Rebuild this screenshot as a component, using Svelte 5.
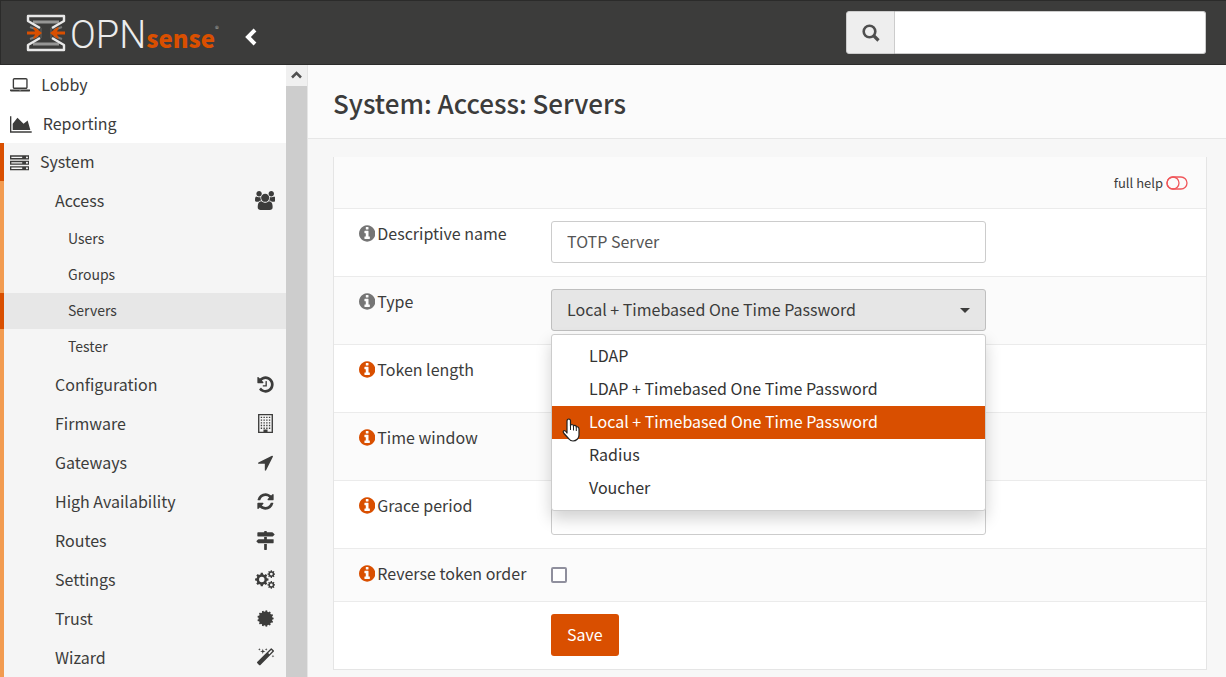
<script>
  const gear = (cx, cy, outer, inner, teeth) => {
    const step = (Math.PI * 2) / teeth;
    const pts = [];
    for (let i = 0; i < teeth; i++) {
      const a = i * step;
      for (const [r, d] of [[inner, -0.3], [outer, -0.2], [outer, 0.2], [inner, 0.3]]) {
        pts.push(`${Math.round(cx + r * Math.cos(a + d * step))} ${Math.round(cy + r * Math.sin(a + d * step))}`);
      }
    }
    return `M${pts.join('L')}z`;
  };
  const hole = (cx, cy, r) => `M${cx - r} ${cy}a${r} ${r} 0 1 0 ${2 * r} 0a${r} ${r} 0 1 0 ${-2 * r} 0z`;
  const box = (x, y, w, h) => `M${x} ${y}h${w}v${h}h${-w}z`;

  let building = box(192, 0, 1408, 1792) + box(320, 128, 1152, 1536);
  for (let r = 0; r < 5; r++) {
    for (let c = 0; c < 4; c++) building += box(448 + c * 256, 256 + r * 256, 128, 128);
  }
  building += box(704, 1472, 384, 192);

  const icons = {
    laptop: [1920, 'M416 1216q-66 0-113-47t-47-113v-704q0-66 47-113t113-47h1088q66 0 113 47t47 113v704q0 66-47 113t-113 47h-1088zm-32-864v704q0 13 9.500 22.500t22.500 9.500h1088q13 0 22.500-9.500t9.500-22.500v-704q0-13-9.500-22.500t-22.500-9.500h-1088q-13 0-22.500 9.500t-9.500 22.500zm1376 928h160v96q0 40-47 68t-113 28h-1600q-66 0-113-28t-47-68v-96h1760zm-720 96q16 0 16-16t-16-16h-160q-16 0-16 16t16 16h160z'],
    chart: [2048, 'M2048 1536v128h-2048v-1536h128v1408h1920zM1664 512l256 896h-1664v-576l448-576 576 576z'],
    server: [1792, 'M128 1408h1024v-128h-1024v128zm0-512h1024v-128h-1024v128zm1568 448q0-40-28-68t-68-28-68 28-28 68 28 68 68 28 68-28 28-68zm-1568-960h1024v-128h-1024v128zm1568 448q0-40-28-68t-68-28-68 28-28 68 28 68 68 28 68-28 28-68zm0-512q0-40-28-68t-68-28-68 28-28 68 28 68 68 28 68-28 28-68zm96 832v384h-1792v-384h1792zm0-512v384h-1792v-384h1792zm0-512v384h-1792v-384h1792z'],
    users: [1920, 'M593 896q-162 5-265 128h-134q-82 0-138-40.500t-56-118.500q0-353 124-353 6 0 43.500 21t97.500 42.500 119 21.500q67 0 133-23-5 37-5 66 0 139 81 256zm1071 637q0 120-73 189.500t-194 69.500h-874q-121 0-194-69.500t-73-189.500q0-53 3.500-103.500t14-109 26.500-108.500 43-97.500 62-81 85.500-53.500 111.500-20q10 0 43 21.500t73 48 107 48 135 21.500 135-21.500 107-48 73-48 43-21.500q61 0 111.500 20t85.500 53.500 62 81 43 97.500 26.500 108.500 14 109 3.500 103.500zm-1024-1277q0 106-75 181t-181 75-181-75-75-181 75-181 181-75 181 75 75 181zm704 384q0 159-112.500 271.500t-271.500 112.500-271.500-112.500-112.500-271.500 112.500-271.500 271.500-112.500 271.500 112.500 112.500 271.500zm576 225q0 78-56 118.500t-138 40.500h-134q-103-123-265-128 81-117 81-256 0-29-5-66 66 23 133 23 59 0 119-21.500t97.500-42.500 43.500-21q124 0 124 353zm-128-609q0 106-75 181t-181 75-181-75-75-181 75-181 181-75 181 75 75 181z'],
    history: [1792, 'M1664 896q0 156-61 298t-164 245-245 164-298 61q-172 0-327-72.500t-264-204.500q-7-10-6.500-22.500t8.500-20.500l137-138q10-9 25-9 16 2 23 12 73 95 179 147t225 52q104 0 198.500-40.500t163.500-109.500 109.500-163.500 40.500-198.500-40.500-198.500-109.500-163.500-163.500-109.500-198.500-40.500q-98 0-188 35.500t-160 101.500l137 138q31 30 14 69-17 40-59 40h-448q-26 0-45-19t-19-45v-448q0-42 40-59 39-17 69 14l130 129q107-101 244.500-156.500t284.500-55.500q156 0 298 61t245 164 164 245 61 298zm-640-288v448q0 14-9 23t-23 9h-320q-14 0-23-9t-9-23v-64q0-14 9-23t23-9h224v-352q0-14 9-23t23-9h64q14 0 23 9t9 23z'],
    building: [1792, building],
    arrow: [1792, 'M1593 349l-640 1280q-17 35-57 35-5 0-15-2-22-5-35.500-22.500t-13.500-39.500v-576h-576q-22 0-39.500-13.500t-22.500-35.500 4-42 29-30l1280-640q13-7 29-7 27 0 45 19 15 14 18.500 34.500t-6.500 39.500z'],
    refresh: [1792, 'M1639 1056q0 5-1 7-64 268-268 434.500t-478 166.500q-146 0-282.500-55t-243.500-157l-129 129q-19 19-45 19t-45-19-19-45v-448q0-26 19-45t45-19h448q26 0 45 19t19 45-19 45l-137 137q71 66 161 102t187 36q134 0 250-65t186-179q11-17 53-117 8-23 30-23h192q13 0 22.500 9.500t9.500 22.500zm25-800v448q0 26-19 45t-45 19h-448q-26 0-45-19t-19-45 19-45l138-138q-148-137-349-137-134 0-250 65t-186 179q-11 17-53 117-8 23-30 23h-199q-13 0-22.500-9.500t-9.500-22.500v-7q65-268 270-434.500t480-166.500q146 0 284 55.500t245 156.500l130-129q19-19 45-19t45 19 19 45z'],
    signs: [1792, 'M1745 297q10 10 10 23t-10 23l-141 141q-28 28-68 28h-1344q-26 0-45-19t-19-45v-256q0-26 19-45t45-19h576v-64q0-26 19-45t45-19h128q26 0 45 19t19 45v64h512q40 0 68 28zm-977 919h256v512q0 26-19 45t-45 19h-128q-26 0-45-19t-19-45v-512zm832-448q26 0 45 19t19 45v256q0 26-19 45t-45 19h-1344q-40 0-68-28l-141-141q-10-10-10-23t10-23l141-141q28-28 68-28h512v-192h256v192h576z'],
    cogs: [1920, gear(640, 896, 640, 500, 8) + hole(640, 896, 256) + gear(1540, 384, 370, 280, 8) + hole(1540, 384, 130) + gear(1540, 1408, 370, 280, 8) + hole(1540, 1408, 130)],
    certificate: [1792, gear(896, 896, 768, 660, 13)],
    magic: [1792, 'M1254 581l293-293-107-107-293 293zm447-293q0 27-18 45l-1286 1286q-18 18-45 18t-45-18l-198-198q-18-18-18-45t18-45l1286-1286q18-18 45-18t45 18l198 198q18 18 18 45zm-1351-190l98 30-98 30-30 98-30-98-98-30 98-30 30-98zm350 162l196 60-196 60-60 196-60-196-196-60 196-60 60-196zm930 478l98 30-98 30-30 98-30-98-98-30 98-30 30-98zm-640-640l98 30-98 30-30 98-30-98-98-30 98-30 30-98z'],
    info: [1536, 'M1024 1376v-160q0-14-9-23t-23-9h-96v-512q0-14-9-23t-23-9h-320q-14 0-23 9t-9 23v160q0 14 9 23t23 9h96v320h-96q-14 0-23 9t-9 23v160q0 14 9 23t23 9h448q14 0 23-9t9-23zm-128-896v-160q0-14-9-23t-23-9h-192q-14 0-23 9t-9 23v160q0 14 9 23t23 9h192q14 0 23-9t9-23zm640 416q0 209-103 385.500t-279.500 279.500-385.500 103-385.500-103-279.500-279.500-103-385.500 103-385.500 279.500-279.500 385.500-103 385.500 103 279.500 279.500 103 385.500z']
  };

  const top = [
    { label: 'Lobby', icon: 'laptop' },
    { label: 'Reporting', icon: 'chart' },
    { label: 'System', icon: 'server', open: true }
  ];
  const access = ['Users', 'Groups', 'Servers', 'Tester'];
  const system = [
    { label: 'Access', icon: 'users', children: access },
    { label: 'Configuration', icon: 'history' },
    { label: 'Firmware', icon: 'building' },
    { label: 'Gateways', icon: 'arrow' },
    { label: 'High Availability', icon: 'refresh' },
    { label: 'Routes', icon: 'signs' },
    { label: 'Settings', icon: 'cogs' },
    { label: 'Trust', icon: 'certificate' },
    { label: 'Wizard', icon: 'magic' }
  ];
  const types = ['LDAP', 'LDAP + Timebased One Time Password', 'Local + Timebased One Time Password', 'Radius', 'Voucher'];

  let name = $state('TOTP Server');
  let type = $state(types[2]);
  let menuOpen = $state(true);
  let tokenLength = $state('');
  let timeWindow = $state('');
  let gracePeriod = $state('');
  let reverse = $state(false);

  function choose(t) {
    type = t;
    menuOpen = false;
  }
</script>

{#snippet icon(key)}
  <svg class="icon" viewBox="0 0 {icons[key][0]} 1792" aria-hidden="true">
    <path fill-rule="evenodd" d={icons[key][1]} />
  </svg>
{/snippet}

<header>
  <a class="brand" href="#home">
    <svg class="mark" viewBox="0 0 40 40" aria-hidden="true">
      <g fill="none" stroke-linejoin="round">
        <path d="M7 9H33M7 31H33" stroke="#969695" stroke-width="3" />
        <path d="M4 14l8 3M36 14l-8 3M4 26l8-3M36 26l-8-3" stroke="#777776" stroke-width="2" />
        <path d="M15 15v10M25 15v10" stroke="#666665" stroke-width="1" />
        <path d="M14 15L2 8V3H38V8L26 15" stroke="#e8e8e8" stroke-width="2.400" />
        <path d="M14 25L2 32V37H38V32L26 25" stroke="#e8e8e8" stroke-width="2.400" />
      </g>
      <path d="M1 18.500H9L7 14.500H9L16 20 9 25.500H7L9 21.500H1zM39 18.500H31L33 14.500H31L24 20 31 25.500H33L31 21.500H39z" fill="#d94f00" />
    </svg>
    <span class="opn">OPN</span><span class="sense">sense</span><span class="reg">®</span>
  </a>
  <button class="collapse" aria-label="Collapse menu">
    <svg viewBox="0 0 12 18" aria-hidden="true"><path d="M10 2L3 9l7 7" fill="none" stroke="#fff" stroke-width="4" /></svg>
  </button>
  <form class="search" role="search">
    <label for="q" aria-label="Search">
      <svg viewBox="0 0 18 18" aria-hidden="true">
        <circle cx="7.500" cy="7.500" r="5.800" fill="none" stroke="#4f4f4f" stroke-width="2.600" />
        <path d="M11.500 11.500l5 5" stroke="#4f4f4f" stroke-width="3.200" />
      </svg>
    </label>
    <input id="q" type="text" />
  </form>
</header>

<div class="body">
  <aside>
    <nav>
      {#each top as item}
        <a class="l1" class:open={item.open} href="#{item.label}">{@render icon(item.icon)}<span>{item.label}</span></a>
      {/each}
      <div class="sub">
        {#each system as item}
          <a class="l2" href="#{item.label}"><span>{item.label}</span><i>{@render icon(item.icon)}</i></a>
          {#if item.children}
            <div class="children">
              {#each item.children as child}
                <a class="l3" class:active={child === 'Servers'} href="#{child}"><span>{child}</span></a>
              {/each}
            </div>
          {/if}
        {/each}
      </div>
    </nav>
    <div class="scroll" aria-hidden="true">
      <svg viewBox="0 0 21 21"><path d="M6 12.500l4.500-4.500 4.500 4.500" fill="none" stroke="#505050" stroke-width="2.500" /></svg>
    </div>
  </aside>

  <main>
    <div class="title"><h1>System: Access: Servers</h1></div>
    <form class="panel" onsubmit={(e) => e.preventDefault()}>
      <div class="help">
        <button type="button">full help
          <svg viewBox="0 0 22 14" aria-hidden="true">
            <g fill="none" stroke="#f0565a" stroke-width="1.300"><rect x="1" y="1" width="20" height="12" rx="6" /><circle cx="7" cy="7" r="6" /></g>
          </svg>
        </button>
      </div>
      <div class="row">
        <label for="name"><i class="muted">{@render icon('info')}</i>Descriptive name</label>
        <input id="name" class="field" type="text" bind:value={name} />
      </div>
      <div class="row">
        <label for="type"><i class="muted">{@render icon('info')}</i>Type</label>
        <div class="picker">
          <select id="type" class="field" bind:value={type}>
            {#each types as t}<option>{t}</option>{/each}
          </select>
          <span class="caret"></span>
          {#if menuOpen}
            <div class="menu" role="listbox" aria-label="Type">
              {#each types as t}
                <button type="button" role="option" aria-selected={t === type} class:selected={t === type} onclick={() => choose(t)}>{t}</button>
              {/each}
              <svg class="pointer" viewBox="0 0 18 24" aria-hidden="true">
                <path d="M5 15V3.200Q5 1 6.800 1T8.500 3.200V8Q8.500 6.500 10 6.500T11.500 8.500Q11.500 7.200 13 7.400T14.300 9.500Q14.500 8.500 15.700 8.800T17 11V17Q17 19.500 15.500 21Q13.500 23 11 23T7 21L2 15.500Q.5 13.500 1.800 12.700T5 15z" fill="#fff" stroke="#222" stroke-width="1.200" stroke-linejoin="round" />
                <path d="M8.500 8v4M11.500 9v3.500M14.300 10v3" stroke="#222" stroke-width="1" />
              </svg>
            </div>
          {/if}
        </div>
      </div>
      <div class="row">
        <label for="token"><i>{@render icon('info')}</i>Token length</label>
        <input id="token" class="field" type="text" bind:value={tokenLength} />
      </div>
      <div class="row">
        <label for="window"><i>{@render icon('info')}</i>Time window</label>
        <input id="window" class="field" type="text" bind:value={timeWindow} />
      </div>
      <div class="row">
        <label for="grace"><i>{@render icon('info')}</i>Grace period</label>
        <input id="grace" class="field" type="text" bind:value={gracePeriod} />
      </div>
      <div class="row">
        <label for="reverse"><i>{@render icon('info')}</i>Reverse token order</label>
        <div class="tick"><input id="reverse" type="checkbox" bind:checked={reverse} /></div>
      </div>
      <div class="row">
        <span></span>
        <button class="save" type="submit">Save</button>
      </div>
    </form>
  </main>
</div>

<style>
  :global(body) { background: #f7f7f7; }
  :global(#app) {
    min-height: 100vh;
    display: flex;
    flex-direction: column;
    color: #3c3c3b;
    font: 16px/24px "Noto Sans CJK SC", "Noto Sans", sans-serif;
  }
  :global(#app) *, :global(#app) { box-sizing: border-box; }
  a { color: inherit; text-decoration: none; }
  button, input, select { font: inherit; color: inherit; margin: 0; }
  i { display: inline-flex; font-style: normal; }
  .icon { display: block; height: 19px; fill: currentColor; }

  header {
    display: flex;
    align-items: center;
    height: 65px;
    padding: 0 20px 0 25px;
    background: #3c3c3b;
    border: 1px solid #2b2b2a;
    border-right: 0;
  }
  .brand { display: flex; align-items: flex-end; width: 187px; height: 40px; }
  .mark { flex: none; width: 40px; height: 40px; margin-right: 4px; }
  .opn { font: 300 38px/36px Roboto, sans-serif; color: #ececec; }
  .sense { font: 900 24px/30px "Noto Sans CJK SC", sans-serif; color: #d94f00; }
  .reg { align-self: flex-start; font-size: 8px; line-height: 32px; color: #aaa; }
  .collapse { display: flex; margin: 8px 0 0 32px; padding: 0; border: 0; background: none; }
  .collapse svg { width: 12px; height: 18px; }
  .search { display: flex; width: 360px; height: 43px; margin-left: auto; }
  .search label {
    display: grid;
    place-items: center;
    width: 49px;
    background: #eee;
    border: 1px solid #ccc;
    border-radius: 3px 0 0 3px;
  }
  .search label svg { width: 18px; height: 18px; }
  .search input {
    flex: 1;
    min-width: 0;
    border: 1px solid #ccc;
    border-left: 0;
    border-radius: 0 3px 3px 0;
    background: #fff;
  }

  .body { flex: 1; display: flex; }
  aside { flex: 0 0 308px; display: flex; background: #fff; border-right: 1px solid #e5e5e5; }
  nav { flex: 1; }
  nav a { display: flex; align-items: center; }
  nav span { padding-bottom: 2px; }
  .l1 { height: 39px; gap: 11px; padding-left: 10px; }
  .l1 .icon { margin-top: 2px; }
  .l1.open { height: 38px; padding-left: 6px; border-left: 4px solid #d94f00; background: #f5f5f5; }
  .sub { border-left: 4px solid #f29b50; background: #f5f5f5; }
  .l2 { height: 39px; padding-left: 51px; justify-content: space-between; }
  .l2 i { width: 42px; justify-content: center; }
  .children { padding-top: 1px; }
  .l3 { height: 36px; padding-left: 64px; font-size: 14px; }
  .l3.active { margin-left: -4px; border-left: 4px solid #d94f00; background: #e7e7e7; }
  .scroll { width: 21px; background: #cdcdcd; }
  .scroll svg { display: block; width: 21px; height: 21px; background: #f0f0f0; }

  main { flex: 1; min-width: 0; }
  .title { padding: 22px 25px 19px; background: #fbfbfb; border-bottom: 1px solid #e7e7e7; }
  h1 { margin: 0; font-size: 26px; line-height: 32px; font-weight: 500; }
  .panel { margin: 18px 19px 7px 25px; background: #fff; border: 1px solid #e5e5e5; border-top: 0; }
  .help { display: flex; justify-content: flex-end; height: 51px; padding: 0 18px; background: #fbfbfb; }
  .help button { display: flex; align-items: center; gap: 3px; padding: 0; border: 0; background: none; font-size: 13px; }
  .help svg { width: 22px; height: 14px; }
  .row {
    display: grid;
    grid-template-columns: 192px 1fr;
    align-items: start;
    padding: 12px 0 13px 25px;
    border-top: 1px solid #ebebeb;
  }
  .row:nth-child(odd) { background: #fbfbfb; }
  .row label { display: flex; align-items: center; gap: 2px; }
  .row label i { color: #d94f00; }
  .row label i.muted { color: #757575; }
  .field {
    display: block;
    width: 100%;
    max-width: 435px;
    height: 42px;
    padding: 0 15px 2px;
    border: 1px solid #ccc;
    border-radius: 3px;
    background: #fff;
  }
  .picker { position: relative; max-width: 435px; }
  input.field { color: #555; }
  select.field { appearance: none; background: #e6e6e6; border-color: #bfbfbf; }
  .caret {
    position: absolute;
    right: 16px;
    top: 19px;
    border: 5px solid transparent;
    border-top-color: #3c3c3b;
    border-bottom: 0;
    pointer-events: none;
  }
  .menu {
    position: absolute;
    z-index: 2;
    top: 45px;
    left: 0;
    right: 0;
    padding: 5px 0;
    background: #fff;
    border: 1px solid #ccc;
    border-radius: 3px;
    box-shadow: 0 8px 16px rgba(0, 0, 0, 0.18);
  }
  .menu button {
    display: block;
    width: 100%;
    height: 33px;
    padding: 0 37px 3px;
    border: 0;
    background: none;
    color: #333;
    text-align: left;
  }
  .menu button.selected { background: #d94f00; color: #fff; }
  .pointer { position: absolute; left: 10px; top: 83px; width: 18px; height: 24px; }
  .tick { display: flex; align-items: center; height: 27px; }
  .tick input {
    appearance: none;
    width: 16px;
    height: 16px;
    border: 2px solid #8f8f9d;
    border-radius: 2px;
    background: #fff;
  }
  .tick input:checked { background: #d94f00; }
  .save {
    justify-self: start;
    height: 42px;
    padding: 0 16px 2px;
    border: 0;
    border-radius: 3px;
    background: #d94f00;
    color: #fff;
  }
</style>
